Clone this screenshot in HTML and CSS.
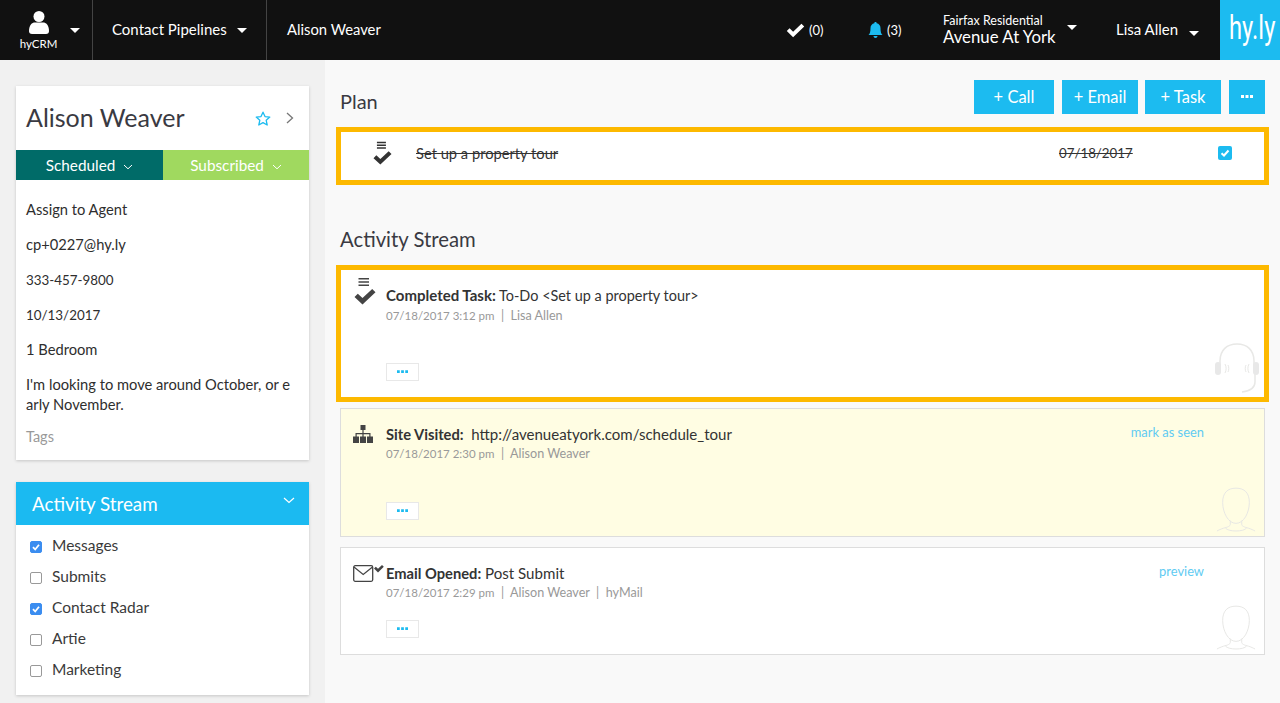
FILE: index.html
```html
<!DOCTYPE html>
<html lang="en">
<head>
<meta charset="utf-8">
<title>hyCRM - Alison Weaver</title>
<link rel="stylesheet" href="styles.css">
</head>
<body>
<svg class="defs" width="0" height="0" aria-hidden="true">
  <defs>
    <symbol id="tick" viewBox="0 0 24 18"><path d="M1 9.500 4.500 6 9 10.500 19.500 .5 23 4 9 17.500z" fill="currentColor"/></symbol>
    <symbol id="task" viewBox="0 0 22 28">
      <path d="M4.500 1h10.500v1.500H4.500zM4.500 4.200h10.500v1.500H4.500zM4.500 7.400h10.500v1.500H4.500z" fill="currentColor"/>
      <path d="M.5 20 3.800 16.700 8.500 21 18.200 12 21.500 15.300 8.500 27.500z" fill="currentColor"/>
    </symbol>
    <symbol id="dots" viewBox="0 0 12 4"><path d="M0 0h3v3H0zM4.500 0h3v3h-3zM9 0h3v3H9z" fill="currentColor"/></symbol>
    <symbol id="face" viewBox="0 0 42 50">
      <g fill="none" stroke="#e6e6e4" stroke-width="1">
        <path d="M21 1C12 1 7 6 7 16c0 11 6 22 14 22s14-11 14-22C35 6 30 1 21 1z"/>
        <path d="M15 35v4c0 2-3 3-7 4-3 1-5 2-7 3M27 35v4c0 2 3 3 7 4 3 1 5 2 7 3M10 43c3 4 19 4 22 0"/>
      </g>
    </symbol>
  </defs>
</svg>

<header class="topbar">
  <div class="nav-cell nav-brand">
    <div class="brand-stack">
      <svg class="person" viewBox="0 0 20 23"><circle cx="10" cy="5.500" r="5.500" fill="#fff"/><path d="M0 20c0-6 3-8.500 6-8.500h8c3 0 6 2.500 6 8.500 0 2-1 3-3 3H3c-2 0-3-1-3-3z" fill="#fff"/></svg>
      <span class="brand-label">hyCRM</span>
    </div>
    <span class="caret caret-brand"></span>
  </div>
  <div class="nav-cell nav-pipe"><span class="nudge">Contact Pipelines</span> <span class="caret"></span></div>
  <div class="nav-cell nav-name"><span class="nudge">Alison Weaver</span></div>
  <div class="nav-right">
    <div class="nav-count nav-todo"><svg class="icon-tick"><use href="#tick"/></svg> (0)</div>
    <div class="nav-count nav-bell"><svg class="icon-bell" viewBox="0 0 14 16"><path d="M7 0c.7 0 1.200.5 1.200 1.200C10.500 1.700 12 3.500 12 6c0 4 .6 5.800 2 7H0c1.400-1.200 2-3 2-7 0-2.500 1.500-4.300 3.800-4.800C5.800.5 6.300 0 7 0zM5 14h4c0 1.100-.9 2-2 2s-2-.9-2-2z" fill="currentColor"/></svg> (3)</div>
    <div class="nav-org">
      <div class="org-text"><span class="org-small">Fairfax Residential</span><span class="org-big">Avenue At York</span></div>
      <span class="caret caret-org"></span>
    </div>
    <div class="nav-user"><span class="nudge">Lisa Allen</span> <span class="caret"></span></div>
    <div class="logo"><span class="logo-text">hy.ly</span></div>
  </div>
</header>

<div class="page">
  <aside class="sidebar">
    <section class="card contact">
      <div class="contact-head">
        <h1>Alison Weaver</h1>
        <svg class="star" viewBox="0 0 16 15"><path d="M8 1.200 10 5.600l4.800.5-3.600 3.200 1 4.700L8 11.600 3.800 14l1-4.700L1.200 6.100 6 5.600z" fill="none" stroke="#1cbbf0" stroke-width="1.300" stroke-linejoin="round"/></svg>
        <svg class="chev-right" viewBox="0 0 8 12"><path d="M1 1l5.500 5L1 11" fill="none" stroke="#777" stroke-width="1.300"/></svg>
      </div>
      <div class="status">
        <div class="status-a">Scheduled <svg class="chev-down" viewBox="0 0 10 6"><path d="M1 1l4 3.800L9 1" fill="none" stroke="#fff" stroke-width="1"/></svg></div>
        <div class="status-b">Subscribed <svg class="chev-down" viewBox="0 0 10 6"><path d="M1 1l4 3.800L9 1" fill="none" stroke="#fff" stroke-width="1"/></svg></div>
      </div>
      <div class="details">
        <p>Assign to Agent</p>
        <p>cp+0227@hy.ly</p>
        <p class="num">333-457-9800</p>
        <p class="num">10/13/2017</p>
        <p>1 Bedroom</p>
        <p class="note">I'm looking to move around October, or e<br>arly November.</p>
        <p class="tags">Tags</p>
      </div>
    </section>

    <section class="card filter">
      <div class="filter-head">Activity Stream <svg class="chev-filter" viewBox="0 0 12 7"><path d="M1 1l5 4.500L11 1" fill="none" stroke="#fff" stroke-width="1.200"/></svg></div>
      <ul class="filter-list">
        <li><span class="box on"><svg viewBox="0 0 12 12"><path d="M3 6.200 5.200 8.500 9 3.800" fill="none" stroke="#fff" stroke-width="1.800"/></svg></span>Messages</li>
        <li><span class="box"></span>Submits</li>
        <li><span class="box on"><svg viewBox="0 0 12 12"><path d="M3 6.200 5.200 8.500 9 3.800" fill="none" stroke="#fff" stroke-width="1.800"/></svg></span>Contact Radar</li>
        <li><span class="box"></span>Artie</li>
        <li><span class="box"></span>Marketing</li>
      </ul>
    </section>
  </aside>

  <main class="main">
    <div class="plan-head">
      <h2>Plan</h2>
      <div class="actions">
        <button class="btn btn-call">+ Call</button>
        <button class="btn btn-email">+ Email</button>
        <button class="btn btn-task">+ Task</button>
        <button class="btn btn-more"><svg class="dots-white"><use href="#dots"/></svg></button>
      </div>
    </div>

    <div class="plan-row">
      <svg class="plan-icon"><use href="#task"/></svg>
      <span class="plan-title">Set up a property tour</span>
      <span class="plan-date">07/18/2017</span>
      <span class="plan-check"><svg viewBox="0 0 14 14"><path d="M3.500 7.200 6 9.500 10.500 4.500" fill="none" stroke="#fff" stroke-width="2"/></svg></span>
    </div>

    <h2 class="stream-title">Activity Stream</h2>

    <div class="stream">
      <article class="item item-highlight">
        <svg class="item-icon icon-task"><use href="#task"/></svg>
        <div class="item-title"><b>Completed Task:</b> To-Do &lt;Set up a property tour&gt;</div>
        <div class="item-meta"><span class="meta-date">07/18/2017 3:12 pm</span> &nbsp;|&nbsp; Lisa Allen</div>
        <button class="more"><svg><use href="#dots"/></svg></button>
        <svg class="avatar headset" viewBox="0 0 46 52">
          <g fill="none" stroke="#e8e8e6">
            <path d="M6 22V18C6 7 13 1 23 1s17 6 17 17v4" stroke-width="1.500"/>
            <path d="M41 30v9c0 6-5 9-13 10" stroke-width="1.500"/>
            <path d="M11 21c1.500 3 1.500 6 0 9M14 22c1 2 1 5 0 7M35 21c-1.500 3-1.500 6 0 9M32 22c-1 2-1 5 0 7"/>
          </g>
          <rect x="1" y="19" width="6" height="13" rx="3" fill="#e8e8e8"/>
          <rect x="39" y="19" width="6" height="13" rx="3" fill="#e8e8e8"/>
        </svg>
      </article>

      <article class="item item-site">
        <svg class="item-icon icon-site" viewBox="0 0 20 18"><path d="M7.500 0h5v5h-5zM9.400 5h1.200v3H17.500v3.500h-1.200V9.200h-5.700v2.300H9.400V9.200H3.700v2.300H2.500V8h6.900zM0 11.500h6V18H0zM7 11.500h6V18H7zM14 11.500h6V18h-6z" fill="currentColor"/></svg>
        <div class="item-title"><b>Site Visited:</b>&nbsp; <span class="url">http://avenueatyork.com/schedule_tour</span></div>
        <div class="item-meta"><span class="meta-date">07/18/2017 2:30 pm</span> &nbsp;|&nbsp; Alison Weaver</div>
        <a class="item-link">mark as seen</a>
        <button class="more"><svg><use href="#dots"/></svg></button>
        <svg class="avatar face"><use href="#face"/></svg>
      </article>

      <article class="item item-mail">
        <svg class="item-icon icon-mail" viewBox="0 0 31 17"><rect x=".7" y=".7" width="19" height="15.600" rx="1.500" fill="none" stroke="currentColor" stroke-width="1.300"/><path d="M1 2l9.200 7.500L19.500 2" fill="none" stroke="currentColor" stroke-width="1.200"/><path d="M21 3.500 22.800 1.700 25 3.800 29 0 30.800 1.800 25 7.500z" fill="currentColor"/></svg>
        <div class="item-title"><b>Email Opened:</b> Post Submit</div>
        <div class="item-meta"><span class="meta-date">07/18/2017 2:29 pm</span> &nbsp;|&nbsp; Alison Weaver &nbsp;|&nbsp; hyMail</div>
        <a class="item-link">preview</a>
        <button class="more"><svg><use href="#dots"/></svg></button>
        <svg class="avatar face"><use href="#face"/></svg>
      </article>
    </div>
  </main>
</div>
</body>
</html>
```

FILE: styles.css
```css
* { box-sizing: border-box; }
html, body { margin: 0; height: 100%; }
body {
  font-family: "Lato", "Open Sans", sans-serif;
  font-size: 15px;
  color: #333;
  background: #f9f9f9;
  overflow: hidden;
}
.defs { display: block; height: 0; }
h1, h2, p, ul { margin: 0; padding: 0; }

/* top bar */
.topbar {
  height: 60px;
  background: #111;
  color: #fff;
  display: flex;
  align-items: stretch;
  font-size: 15px;
}
.nudge { position: relative; top: -1px; }
.nav-cell { display: flex; align-items: center; border-right: 1px solid #444; }
.nav-brand { width: 93px; padding-left: 20px; }
.brand-stack { display: flex; flex-direction: column; align-items: center; width: 37px; padding-top: 2px; }
.person { width: 20px; height: 23px; }
.brand-label { font-size: 11.500px; margin-top: 3px; line-height: 14px; }
.caret {
  display: inline-block;
  width: 0;
  height: 0;
  border-left: 5px solid transparent;
  border-right: 5px solid transparent;
  border-top: 5px solid #fff;
  margin-left: 7px;
}
.caret-brand { margin-left: 13px; }
.nav-pipe { width: 174px; padding-left: 19px; }
.nav-pipe .caret { margin-left: 10px; }
.nav-name { border-right: 0; padding-left: 20px; font-size: 14.800px; }
.nav-right { margin-left: auto; display: flex; align-items: center; }
.nav-count { display: flex; align-items: center; gap: 4px; font-size: 13px; }
.nav-todo { width: 82px; }
.icon-tick { width: 19px; height: 15px; color: #fff; }
.nav-bell { width: 74px; }
.icon-bell { width: 15px; height: 16px; color: #1cbbf0; }
.nav-org { display: flex; width: 174px; align-items: center; padding-left: 1px; }
.org-text { display: flex; flex-direction: column; }
.org-small { font-size: 12.500px; line-height: 14px; }
.org-big { font-size: 16.800px; line-height: 18px; }
.caret-org { margin: 0 0 6px 11px; }
.nav-user { width: 104px; }
.logo {
  width: 60px;
  height: 60px;
  background: #1cbbf0;
  font-family: "Roboto", sans-serif;
  font-weight: 400;
  font-size: 33px;
  line-height: 56px;
  text-align: center;
  padding-right: 2px;
  overflow: hidden;
}
.logo-text { display: inline-block; transform: scaleX(.72); }

/* page */
.page { display: flex; height: 643px; }
.sidebar { width: 325px; background: #f1f1f1; padding: 26px 16px 0; flex: none; }
.card { background: #fff; box-shadow: 0 1px 3px rgba(0, 0, 0, .18); width: 293px; }
.contact { height: 374px; }
.contact-head { height: 64px; display: flex; align-items: center; padding: 0 15px 0 10px; }
.contact-head h1 { font-size: 25px; font-weight: 400; color: #3a3a42; flex: 1; position: relative; top: -1px; }
.star { width: 16px; height: 15px; margin-right: 15px; }
.chev-right { width: 8px; height: 12px; }
.status { display: flex; height: 30px; color: #fff; font-size: 15.300px; line-height: 30px; text-align: center; }
.status-a { width: 147px; background: #006b68; }
.status-b { width: 146px; background: #a0d95f; }
.chev-down { width: 10px; height: 6px; margin: 0 0 1px 4px; }
.details { padding: 19px 10px 0; font-size: 14.700px; color: #2e2e2e; }
.details p { line-height: 20px; margin-bottom: 15px; }
.details .num { font-size: 13.400px; position: relative; top: 1px; }
.details .note { margin-bottom: 13px; }
.details .tags { color: #999; font-size: 14.500px; }

.filter { margin-top: 22px; height: 213px; }
.filter-head {
  height: 43px;
  background: #1bbaf1;
  color: #fff;
  font-size: 18.800px;
  line-height: 44px;
  padding-left: 16px;
  position: relative;
}
.chev-filter { position: absolute; right: 14px; top: 15px; width: 12px; height: 7px; }
.filter-list { list-style: none; padding: 4px 14px 0; font-size: 15.500px; color: #3a3a3a; }
.filter-list li { height: 31px; display: flex; align-items: center; }
.box { width: 12px; height: 12px; border: 1px solid #999; border-radius: 2px; background: #fff; margin-right: 10px; flex: none; position: relative; top: 2px; }
.box svg { display: block; width: 12px; height: 12px; margin: -1px; }
.box.on { background: #3b8df0; border-color: #3b8df0; }

/* main */
.main { flex: 1; padding: 20px 11px 0 11px; }
.plan-head { display: flex; justify-content: space-between; padding: 0 4px; height: 47px; }
.main h2 { font-size: 20px; font-weight: 400; color: #3a3a42; }
.plan-head h2 { line-height: 42px; }
.actions { display: flex; }
.btn {
  height: 34px;
  border: 0;
  background: #1cbbf0;
  color: #fff;
  font-family: inherit;
  font-size: 16.500px;
  padding: 0;
  display: block;
}
.btn-call { width: 80px; margin-right: 8px; }
.btn-email { width: 76px; margin-right: 7px; }
.btn-task { width: 76px; margin-right: 8px; }
.btn-more { width: 36px; }
.dots-white { display: block; width: 12px; height: 4px; margin: 0 auto; color: #fff; }

.plan-row {
  height: 58px;
  width: 933px;
  background: #fff;
  border: 5px solid #fdb900;
  display: flex;
  align-items: center;
  position: relative;
}
.plan-icon { width: 19px; height: 24px; margin-left: 32px; color: #333; flex: none; position: relative; top: -3px; }
.plan-title { margin-left: 24px; font-size: 14.700px; text-decoration: line-through; color: #333; position: relative; top: -3px; }
.plan-date { margin-left: auto; font-size: 13.300px; text-decoration: line-through; color: #333; width: 75px; position: relative; top: -3px; }
.plan-check { width: 14px; height: 14px; margin: 0 32px 0 84px; background: #1cbbf0; border-radius: 2px; position: relative; top: -3px; }
.plan-check svg { display: block; width: 14px; height: 14px; }

.main .stream-title { padding-left: 4px; font-size: 20.300px; line-height: 24px; margin: 42px 0 14px; }
.stream { display: flex; flex-direction: column; align-items: stretch; }
.item {
  position: relative;
  background: #fff;
  border: 1px solid #ddd;
  padding-left: 45px;
  margin: 0 4px 10px;
}
.item-highlight { height: 137px; margin: 0 0 6px; border: 5px solid #fdb900; padding: 15px 0 0 45px; }
.item-site { height: 129px; background: #fffde3; padding-top: 15px; }
.item-mail { height: 108px; padding-top: 15px; }
.item-title { font-size: 15.100px; line-height: 20px; color: #333; }
.item-title b { font-weight: 700; font-size: 14.700px; }
.item-highlight .item-title { font-size: 14.450px; }
.item-highlight .item-title b { font-size: 15px; }
.item-title .url { font-size: 15.050px; }
.item-meta { font-size: 12.600px; line-height: 18px; color: #999; margin-top: 1px; }
.meta-date { font-size: 11.500px; }
.item-icon { position: absolute; color: #444; }
.icon-task { left: 13px; top: 7px; width: 22px; height: 28px; }
.icon-site { left: 12px; top: 16px; width: 20px; height: 18px; }
.icon-mail { left: 12px; top: 17px; width: 31px; height: 17px; }
.item-link { position: absolute; right: 60px; top: 15px; color: #5fcbf2; font-size: 12.900px; line-height: 16px; }
.more {
  position: absolute;
  left: 45px;
  bottom: 16px;
  width: 33px;
  height: 18px;
  background: #fff;
  border: 1px solid #e8e8e8;
  padding: 0;
  color: #1cbbf0;
}
.more svg { display: block; width: 11px; height: 4px; margin: 0 auto; }
.avatar { position: absolute; }
.face { right: 8px; bottom: 1px; width: 40px; height: 48px; }
.headset { right: 4px; bottom: 2px; width: 46px; height: 52px; }
```
